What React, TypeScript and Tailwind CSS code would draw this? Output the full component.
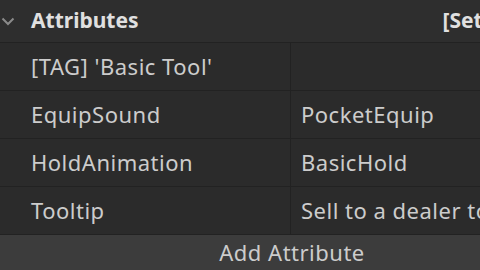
const rows = [
  { name: "[TAG] 'Basic Tool'", value: "" },
  { name: "EquipSound", value: "PocketEquip" },
  { name: "HoldAnimation", value: "BasicHold" },
  { name: "Tooltip", value: "Sell to a dealer to get cash" },
];

export default function App() {
  return (
    <div className="h-[270px] w-[480px] overflow-hidden bg-[#2b2b2b]">
      <div className="flex h-[270px] w-[584px] flex-col font-['Noto_Sans','Open_Sans',sans-serif] text-[22px] tracking-[0.5px] text-[#cccccc]">
        <div className="flex h-[43px] shrink-0 items-center border-b border-[#222222] bg-[#2e2e2e] text-[21px] tracking-normal">
          <svg className="ml-[1px] h-[14px] w-[14px]" viewBox="0 0 14 14" fill="none">
            <path d="M1.5 4.5 L7 10 L12.5 4.5" stroke="#8a8a8a" strokeWidth="2" />
          </svg>
          <span className="ml-[16px] font-bold text-[#e0e0e0]">Attributes</span>
          <span className="ml-[304px] whitespace-nowrap font-bold text-[#e0e0e0]">[Settings]</span>
        </div>
        {rows.map((r) => (
          <div key={r.name} className="flex h-[48px] shrink-0 items-center border-b border-[#222222]">
            <div className="flex h-full w-[291px] shrink-0 items-center border-r border-[#222222] pl-[31px]">
              {r.name}
            </div>
            <div className="whitespace-nowrap pl-[10px]">{r.value}</div>
          </div>
        ))}
        <div className="flex flex-1 items-center justify-center bg-[#3c3c3c]">Add Attribute</div>
      </div>
    </div>
  );
}
